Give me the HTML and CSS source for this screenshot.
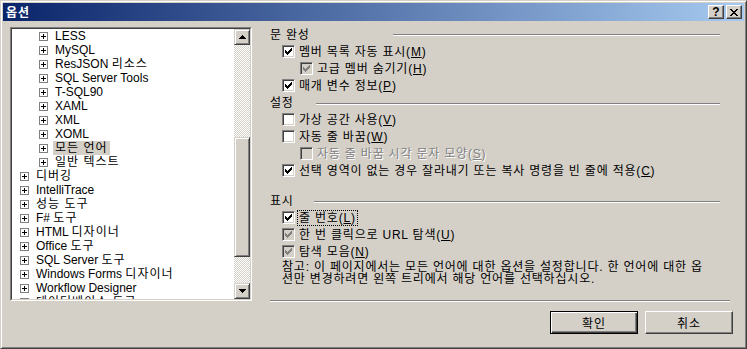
FILE: index.html
```html
<!DOCTYPE html>
<html lang="ko">
<head>
    <meta charset="UTF-8">
    <title>옵션</title>
    <link rel="stylesheet" href="styles.css">
</head>
<body>
    <div class="window">
        <div class="titlebar">
            <span class="title">옵션</span>
            <div class="caption">
                <button class="cap cap-help">?</button>
                <button class="cap">
                    <svg width="8" height="7" viewBox="0 0 8 7"><path d="M0 0h2v1h1v1h2V1h1V0h2v1H7v1H6v1H5v1h1v1h1v1h1v1H6V6H5V5H3v1H2v1H0V6h1V5h1V4h1V3H2V2H1V1H0z"/></svg>
                </button>
            </div>
        </div>

        <div class="content">
            <div class="main">
                <div class="tree">
                    <div class="tree-in">
                        <ul class="tree-list">
                            <li class="sub"><span class="exp"></span><span class="node">LESS</span></li>
                            <li class="sub"><span class="exp"></span><span class="node">MySQL</span></li>
                            <li class="sub"><span class="exp"></span><span class="node">ResJSON <span class="ko">리소스</span></span></li>
                            <li class="sub"><span class="exp"></span><span class="node">SQL Server Tools</span></li>
                            <li class="sub"><span class="exp"></span><span class="node">T-SQL90</span></li>
                            <li class="sub"><span class="exp"></span><span class="node">XAML</span></li>
                            <li class="sub"><span class="exp"></span><span class="node">XML</span></li>
                            <li class="sub"><span class="exp"></span><span class="node">XOML</span></li>
                            <li class="sub"><span class="exp"></span><span class="node ko selected">모든 언어</span></li>
                            <li class="sub"><span class="exp"></span><span class="node ko">일반 텍스트</span></li>
                            <li><span class="exp"></span><span class="node ko">디버깅</span></li>
                            <li><span class="exp"></span><span class="node">IntelliTrace</span></li>
                            <li><span class="exp"></span><span class="node ko">성능 도구</span></li>
                            <li><span class="exp"></span><span class="node">F# <span class="ko">도구</span></span></li>
                            <li><span class="exp"></span><span class="node">HTML <span class="ko">디자이너</span></span></li>
                            <li><span class="exp"></span><span class="node">Office <span class="ko">도구</span></span></li>
                            <li><span class="exp"></span><span class="node">SQL Server <span class="ko">도구</span></span></li>
                            <li><span class="exp"></span><span class="node">Windows Forms <span class="ko">디자이너</span></span></li>
                            <li><span class="exp"></span><span class="node">Workflow Designer</span></li>
                            <li><span class="exp"></span><span class="node ko">데이터베이스 도구</span></li>
                        </ul>
                        <div class="vscroll">
                            <div class="sb-btn">
                                <svg width="7" height="4" viewBox="0 0 7 4"><path d="M3 0h1v1h1v1h1v1h1v1H0V3h1V2h1V1h1z"/></svg>
                            </div>
                            <div class="sb-track">
                                <div class="sb-thumb"></div>
                            </div>
                            <div class="sb-btn">
                                <svg width="7" height="4" viewBox="0 0 7 4"><path d="M0 0h7v1H6v1H5v1H4v1H3V3H2V2H1V1H0z"/></svg>
                            </div>
                        </div>
                    </div>
                </div>

                <div class="options">
                    <div class="group">
                        <span>문 완성</span><span class="rule rule-1"></span>
                    </div>
                    <div class="opt">
                        <span class="cb"><svg class="tick" viewBox="0 0 7 7"><path d="M0 2h1v3H0zM1 3h1v3H1zM2 4h1v3H2zM3 3h1v3H3zM4 2h1v3H4zM5 1h1v3H5zM6 0h1v3H6z"/></svg></span>
                        <span class="lbl">멤버 목록 자동 표시(<u>M</u>)</span>
                    </div>
                    <div class="opt sub">
                        <span class="cb off"><svg class="tick" viewBox="0 0 7 7"><path d="M0 2h1v3H0zM1 3h1v3H1zM2 4h1v3H2zM3 3h1v3H3zM4 2h1v3H4zM5 1h1v3H5zM6 0h1v3H6z"/></svg></span>
                        <span class="lbl">고급 멤버 숨기기(<u>H</u>)</span>
                    </div>
                    <div class="opt">
                        <span class="cb"><svg class="tick" viewBox="0 0 7 7"><path d="M0 2h1v3H0zM1 3h1v3H1zM2 4h1v3H2zM3 3h1v3H3zM4 2h1v3H4zM5 1h1v3H5zM6 0h1v3H6z"/></svg></span>
                        <span class="lbl">매개 변수 정보(<u>P</u>)</span>
                    </div>

                    <div class="group">
                        <span>설정</span><span class="rule rule-2"></span>
                    </div>
                    <div class="opt">
                        <span class="cb"></span>
                        <span class="lbl">가상 공간 사용(<u>V</u>)</span>
                    </div>
                    <div class="opt">
                        <span class="cb"></span>
                        <span class="lbl">자동 줄 바꿈(<u>W</u>)</span>
                    </div>
                    <div class="opt sub">
                        <span class="cb off"></span>
                        <span class="lbl dim">자동 줄 바꿈 시각 문자 모양(<u>S</u>)</span>
                    </div>
                    <div class="opt">
                        <span class="cb"><svg class="tick" viewBox="0 0 7 7"><path d="M0 2h1v3H0zM1 3h1v3H1zM2 4h1v3H2zM3 3h1v3H3zM4 2h1v3H4zM5 1h1v3H5zM6 0h1v3H6z"/></svg></span>
                        <span class="lbl">선택 영역이 없는 경우 잘라내기 또는 복사 명령을 빈 줄에 적용(<u>C</u>)</span>
                    </div>

                    <div class="group group-gap">
                        <span>표시</span><span class="rule rule-3"></span>
                    </div>
                    <div class="opt">
                        <span class="cb"><svg class="tick" viewBox="0 0 7 7"><path d="M0 2h1v3H0zM1 3h1v3H1zM2 4h1v3H2zM3 3h1v3H3zM4 2h1v3H4zM5 1h1v3H5zM6 0h1v3H6z"/></svg></span>
                        <span class="lbl focus">줄 번호(<u>L</u>)</span>
                    </div>
                    <div class="opt">
                        <span class="cb off"><svg class="tick" viewBox="0 0 7 7"><path d="M0 2h1v3H0zM1 3h1v3H1zM2 4h1v3H2zM3 3h1v3H3zM4 2h1v3H4zM5 1h1v3H5zM6 0h1v3H6z"/></svg></span>
                        <span class="lbl">한 번 클릭으로 URL 탐색(<u>U</u>)</span>
                    </div>
                    <div class="opt">
                        <span class="cb off"><svg class="tick" viewBox="0 0 7 7"><path d="M0 2h1v3H0zM1 3h1v3H1zM2 4h1v3H2zM3 3h1v3H3zM4 2h1v3H4zM5 1h1v3H5zM6 0h1v3H6z"/></svg></span>
                        <span class="lbl">탐색 모음(<u>N</u>)</span>
                    </div>

                    <p class="note">참고: 이 페이지에서는 모든 언어에 대한 옵션을 설정합니다. 한 언어에 대한 옵<br>션만 변경하려면 왼쪽 트리에서 해당 언어를 선택하십시오.</p>

                    <div class="sep"></div>
                </div>
            </div>

            <div class="footer">
                <button class="btn btn-default">확인</button>
                <button class="btn">취소</button>
            </div>
        </div>
    </div>
</body>
</html>
```

FILE: styles.css
```css
*{
    margin: 0;
    padding: 0;
    box-sizing: border-box;
}
body{
    width: 747px;
    height: 349px;
    overflow: hidden;
    background-color: #d4d0c8;
    font-family: "Liberation Sans", "Noto Sans CJK KR", sans-serif;
    font-size: 12px;
    color: #000;
}
.window{
    width: 747px;
    height: 349px;
    display: flex;
    flex-direction: column;
    padding: 2px;
    border: 1px solid;
    border-color: #d4d0c8 #404040 #404040 #d4d0c8;
    box-shadow: inset 1px 1px #fff, inset -1px -1px #808080;
}

/* title bar */
.titlebar{
    height: 18px;
    display: flex;
    align-items: center;
    justify-content: space-between;
    padding: 0 2px 0 3px;
    background: linear-gradient(to right, #0a246a, #a6caf0);
}
.title{
    color: #fff;
    font-family: "Noto Sans CJK KR", sans-serif;
    font-weight: bold;
    font-size: 12px;
    line-height: 18px;
    letter-spacing: 1px;
}
.caption{
    display: flex;
    gap: 2px;
}
.cap{
    width: 16px;
    height: 14px;
    display: flex;
    align-items: center;
    justify-content: center;
    background-color: #d4d0c8;
    border: 1px solid;
    border-color: #fff #404040 #404040 #fff;
    box-shadow: inset -1px -1px #808080;
    font-family: "Liberation Sans", sans-serif;
}
.cap-help{
    font-size: 12px;
    font-weight: bold;
    line-height: 12px;
}

.content{
    flex: 1;
    padding: 5px 11px 0 7px;
    display: flex;
    flex-direction: column;
}
.main{
    height: 276px;
    display: flex;
}

/* tree */
.tree{
    width: 242px;
    height: 274px;
    margin-top: 1px;
    border: 1px solid;
    border-color: #808080 #fff #fff #808080;
}
.tree-in{
    height: 100%;
    display: flex;
    border: 1px solid;
    border-color: #404040 #d4d0c8 #d4d0c8 #404040;
    background-color: #fff;
}
.tree-list{
    flex: 1;
    list-style: none;
    overflow: hidden;
}
.tree-list li{
    height: 14px;
    display: flex;
    align-items: center;
    padding-left: 8px;
    white-space: nowrap;
}
.tree-list li.sub{
    padding-left: 27px;
}
.exp{
    width: 9px;
    height: 9px;
    position: relative;
    flex: none;
    border: 1px solid #808080;
    background-color: #fff;
}
.exp::before{
    content: "";
    position: absolute;
    left: 1px;
    top: 3px;
    width: 5px;
    height: 1px;
    background-color: #000;
}
.exp::after{
    content: "";
    position: absolute;
    left: 3px;
    top: 1px;
    width: 1px;
    height: 5px;
    background-color: #000;
}
.node{
    margin-left: 5px;
    padding: 0 2px;
    line-height: 14px;
}
.ko{
    letter-spacing: 1px;
}
.node.selected{
    background-color: #d4d0c8;
}

.vscroll{
    width: 16px;
    display: flex;
    flex-direction: column;
}
.sb-btn{
    width: 16px;
    height: 16px;
    display: flex;
    align-items: center;
    justify-content: center;
    background-color: #d4d0c8;
    border: 1px solid;
    border-color: #d4d0c8 #404040 #404040 #d4d0c8;
    box-shadow: inset 1px 1px #fff, inset -1px -1px #808080;
}
.sb-track{
    flex: 1;
    background: repeating-conic-gradient(#fff 0 25%, #d4d0c8 0 50%) 0 0 / 2px 2px;
}
.sb-thumb{
    height: 120px;
    margin-top: 92px;
    background-color: #d4d0c8;
    border: 1px solid;
    border-color: #d4d0c8 #404040 #404040 #d4d0c8;
    box-shadow: inset 1px 1px #fff, inset -1px -1px #808080;
}

/* options */
.options{
    width: 460px;
    margin-left: 18px;
    display: flex;
    flex-direction: column;
    letter-spacing: 0.8px;
}
.group{
    height: 17px;
    display: flex;
    align-items: center;
    line-height: 14px;
}
.group-gap{
    margin-top: 13px;
}
.rule{
    height: 2px;
    margin-left: auto;
    margin-right: 10px;
    border-top: 1px solid #808080;
    border-bottom: 1px solid #fff;
}
.rule-1{ width: 327px; }
.rule-2{ width: 404px; margin-top: 3px; }
.rule-3{ width: 406px; margin-top: 2px; }

.opt{
    height: 17px;
    display: flex;
    align-items: center;
    padding-left: 12px;
    white-space: nowrap;
}
.opt.sub{
    padding-left: 30px;
}
.cb{
    width: 13px;
    height: 13px;
    flex: none;
    display: flex;
    align-items: center;
    justify-content: center;
    background-color: #fff;
    border: 1px solid;
    border-color: #808080 #fff #fff #808080;
    box-shadow: inset 1px 1px #404040, inset -1px -1px #d4d0c8;
}
.cb.off{
    background-color: #d4d0c8;
}
.tick{
    width: 7px;
    height: 7px;
    fill: #000;
}
.cb.off .tick{
    fill: #808080;
}
.lbl{
    margin-left: 2px;
    padding: 0 1px;
    line-height: 14px;
    border: 1px dotted transparent;
}
.lbl.focus{
    border-color: #000;
}
.lbl.dim{
    color: #808080;
    text-shadow: 1px 1px #fff;
}
.note{
    padding-left: 12px;
    margin-top: 1px;
    line-height: 12px;
    white-space: nowrap;
}
.sep{
    margin-top: auto;
    height: 2px;
    border-top: 1px solid #808080;
    border-bottom: 1px solid #fff;
}

/* buttons */
.footer{
    display: flex;
    justify-content: flex-end;
    gap: 7px;
    margin-top: 9px;
}
.btn{
    width: 88px;
    height: 23px;
    background-color: #d4d0c8;
    font-family: "Noto Sans CJK KR", sans-serif;
    font-size: 12px;
    letter-spacing: 1px;
    color: #000;
    border: 1px solid;
    border-color: #fff #404040 #404040 #fff;
    box-shadow: inset -1px -1px #808080;
}
.btn-default{
    border-color: #000;
    box-shadow: inset 1px 1px #fff, inset -1px -1px #404040, inset -2px -2px #808080;
}
```
